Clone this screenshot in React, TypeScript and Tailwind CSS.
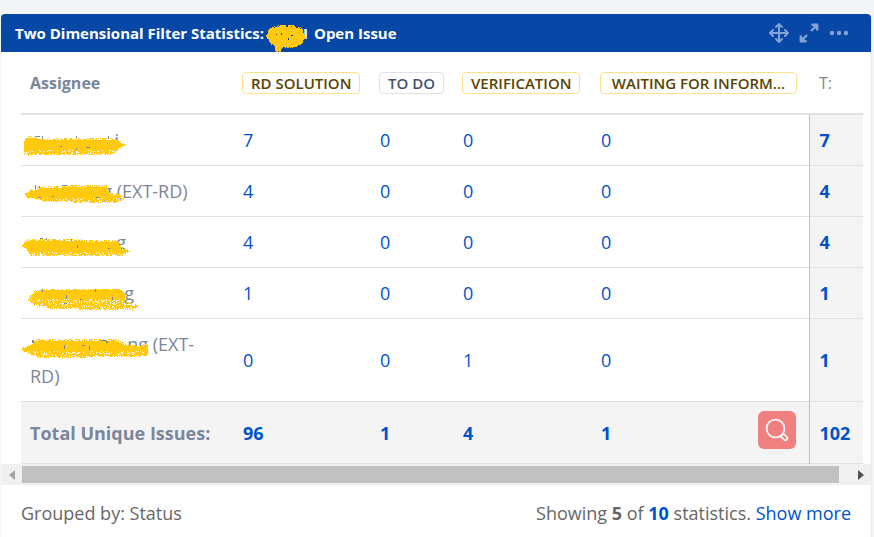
import { useMemo } from "react";
import clsx from "clsx";

type Point = [number, number];

interface Marker {
  width: number;
  height: number;
  top: Point[];
  bottom: Point[];
  seed: number;
  // share of the height, measured from the bottom, that is only loosely covered
  loose: number;
  ticks?: [number, number, number, number][];
}

interface Row {
  id: string;
  marker: Marker;
  boxClass: string;
  markClass: string;
  tail?: string;
  suffix?: string;
  counts: number[];
  total: number;
}

const ROWS: Row[] = [
  {
    id: "r1",
    boxClass: "w-[89px]",
    markClass: "-left-1.5 top-3",
    tail: "i",
    marker: {
      width: 102,
      height: 20,
      seed: 11,
      loose: 0.32,
      top: [[0, 5], [3, 1], [10, 0], [14, 3], [30, 3], [80, 2], [92, 3], [97, 6], [101, 8]],
      bottom: [[0, 18], [4, 19], [60, 18], [88, 18], [93, 14], [101, 9]],
      ticks: [[11, 0, 5, 1], [18, 0, 1, 3], [52, 0, 1, 2], [84, 0, 1, 3], [36, 10, 2, 1], [52, 12, 1, 2], [62, 11, 4, 1]],
    },
    counts: [7, 0, 0, 0],
    total: 7,
  },
  {
    id: "r2",
    boxClass: "w-[82px]",
    markClass: "-left-1.5 top-2.5",
    tail: "g",
    suffix: "(EXT-RD)",
    marker: {
      width: 100,
      height: 18,
      seed: 23,
      loose: 0.28,
      top: [[0, 9], [6, 5], [16, 2], [40, 1], [82, 0], [85, 8], [94, 9], [99, 13]],
      bottom: [[0, 10], [4, 13], [20, 16], [50, 17], [80, 17], [94, 17], [99, 14]],
      ticks: [[11, 0, 1, 4], [15, 1, 1, 2], [38, 0, 5, 1], [14, 12, 3, 1], [28, 11, 2, 1], [72, 12, 3, 1]],
    },
    counts: [4, 0, 0, 0],
    total: 4,
  },
  {
    id: "r3",
    boxClass: "w-[96px]",
    markClass: "-left-2 top-3",
    tail: "g",
    marker: {
      width: 108,
      height: 19,
      seed: 37,
      loose: 0.3,
      top: [[0, 6], [4, 2], [10, 1], [60, 2], [96, 3], [99, 10], [102, 11], [107, 12]],
      bottom: [[0, 8], [5, 12], [8, 17], [14, 18], [80, 17], [100, 17], [107, 13]],
      ticks: [[18, 0, 3, 1], [24, 0, 1, 2], [49, 1, 1, 2], [55, 7, 1, 3], [86, 10, 2, 1]],
    },
    counts: [4, 0, 0, 0],
    total: 4,
  },
  {
    id: "r4",
    boxClass: "w-[104px]",
    markClass: "-left-0.5 top-3",
    tail: "g",
    marker: {
      width: 110,
      height: 22,
      seed: 41,
      loose: 0.55,
      top: [[0, 9], [6, 2], [14, 0], [92, 0], [96, 4], [97, 14], [103, 15], [109, 16]],
      bottom: [[0, 11], [6, 16], [20, 19], [50, 20], [98, 20], [104, 21], [109, 18]],
      ticks: [[14, 0, 1, 3], [38, 6, 1, 4], [52, 10, 2, 1], [67, 0, 1, 3], [36, 14, 3, 1], [84, 8, 1, 3]],
    },
    counts: [1, 0, 0, 0],
    total: 1,
  },
  {
    id: "r5",
    boxClass: "w-[118px]",
    markClass: "-left-2 top-2.5",
    tail: "ng",
    suffix: "(EXT-RD)",
    marker: {
      width: 126,
      height: 21,
      seed: 59,
      loose: 0.42,
      top: [[0, 10], [8, 7], [14, 1], [50, 2], [92, 1], [104, 6], [116, 8], [125, 6]],
      bottom: [[0, 12], [8, 16], [16, 19], [40, 20], [70, 19], [118, 18], [125, 17]],
      ticks: [[10, 2, 2, 3], [42, 7, 1, 4], [60, 7, 3, 1], [67, 8, 1, 4], [79, 2, 5, 1], [84, 3, 2, 2]],
    },
    counts: [0, 0, 1, 0],
    total: 1,
  },
];

const TITLE_MARKER: Marker = {
  width: 40,
  height: 28,
  seed: 7,
  loose: 0.08,
  top: [[0, 10], [3, 3], [10, 1], [24, 0], [33, 2], [36, 4], [39, 12]],
  bottom: [[0, 12], [5, 19], [8, 20], [9, 26], [14, 27], [16, 22], [26, 22], [34, 20], [39, 13]],
  ticks: [[10, 9, 1, 1], [15, 8, 1, 2], [22, 13, 1, 2], [25, 10, 2, 1]],
};

const STATUSES = [
  { label: "RD SOLUTION", tone: "yellow" },
  { label: "TO DO", tone: "gray" },
  { label: "VERIFICATION", tone: "yellow" },
  { label: "WAITING FOR INFORM...", tone: "yellow", wide: true },
];

const TOTALS = [96, 1, 4, 1];

function lerpAt(points: Point[], x: number) {
  for (let i = 1; i < points.length; i++) {
    const [x0, y0] = points[i - 1];
    const [x1, y1] = points[i];
    if (x <= x1) return y0 + ((y1 - y0) * (x - x0)) / (x1 - x0);
  }
  return points[points.length - 1][1];
}

// Spray of one-pixel squares: solid in the middle, ragged along the edges.
function sprayPath({ width, height, top, bottom, seed, loose }: Marker) {
  let state = seed * 7919;
  const random = () => {
    state = (state * 1103515245 + 12345) % 2147483648;
    return state / 2147483648;
  };
  let d = "";
  for (let x = 0; x < width; x++) {
    const y0 = lerpAt(top, x);
    const y1 = lerpAt(bottom, x);
    for (let y = Math.floor(y0); y <= y1; y++) {
      let density = 1;
      if (y > height * (1 - loose)) density = 0.82;
      if (y - y0 < 1 || y1 - y < 1) density = 0.5;
      if (random() < density) d += `M${x} ${y}h1v1h-1z`;
    }
  }
  return d;
}

function MarkerStroke({ marker, className, tickClass }: { marker: Marker; className: string; tickClass: string }) {
  const d = useMemo(() => sprayPath(marker), [marker]);
  return (
    <svg
      width={marker.width}
      height={marker.height}
      shapeRendering="crispEdges"
      className={clsx("absolute max-w-none", className)}
      aria-hidden="true"
    >
      <path d={d} fill="#ffc90e" />
      {marker.ticks?.map(([x, y, w, h]) => (
        <rect key={`${x}-${y}`} x={x} y={y} width={w} height={h} className={tickClass} />
      ))}
    </svg>
  );
}

function Lozenge({ label, tone, wide }: { label: string; tone: string; wide?: boolean }) {
  return (
    <span
      className={clsx(
        "inline-block h-[22px] rounded-[4px] border bg-white px-2 text-center align-middle text-[15px] leading-5 font-semibold whitespace-nowrap",
        wide && "w-full",
        tone === "yellow" ? "border-[#ffe08a] text-[#594300]" : "border-[#dfe1e6] text-[#42526e]"
      )}
    >
      {label}
    </span>
  );
}

function GadgetHeader() {
  return (
    <header className="flex h-[38px] items-center justify-between rounded-t bg-[#0747a6] pr-[22px] pl-[14px]">
      <h3 className="flex text-[15px] leading-5 font-bold whitespace-nowrap text-white">
        Two Dimensional Filter Statistics:
        <span className="relative mr-1.5 ml-0.5 inline-block w-[42px] text-right">
          I
          <MarkerStroke marker={TITLE_MARKER} className="top-0.5 left-0" tickClass="fill-[#0747a6]" />
        </span>
        Open Issue
      </h3>
      <div className="flex items-center gap-[10px] text-[#84a3d3]">
        <button type="button" aria-label="Move">
          <svg width="20" height="20" viewBox="0 0 20 20" fill="none" stroke="currentColor" strokeWidth="2" strokeLinecap="round" strokeLinejoin="round">
            <path d="M10 1.5v17M1.5 10h17M7 4l3-3 3 3M7 16l3 3 3-3M4 7l-3 3 3 3M16 7l3 3-3 3" />
          </svg>
        </button>
        <button type="button" aria-label="Maximize">
          <svg width="20" height="20" viewBox="0 0 20 20" fill="none" stroke="currentColor" strokeWidth="2.4" strokeLinejoin="round">
            <path d="M12.5 1.8H18.2V7.5M18 2l-6 6M1.8 12.5V18.2H7.5M2 18l6-6" />
            <path d="M14 2.5h3.5V6zM2.5 14v3.5H6z" fill="currentColor" strokeWidth="1" />
          </svg>
        </button>
        <button type="button" aria-label="More actions">
          <svg width="20" height="20" viewBox="0 0 20 20" fill="currentColor">
            <circle cx="3" cy="10" r="2.2" />
            <circle cx="10" cy="10" r="2.2" />
            <circle cx="17" cy="10" r="2.2" />
          </svg>
        </button>
      </div>
    </header>
  );
}

function CountLink({ value }: { value: number }) {
  return (
    <a href="#issues" className="text-[#0052cc]">
      {value}
    </a>
  );
}

function StatsTable() {
  return (
    <table className="w-full table-fixed border-collapse text-left text-[18px] leading-8">
      <colgroup>
        <col className="w-[212px]" />
        <col className="w-[137px]" />
        <col className="w-[83px]" />
        <col className="w-[138px]" />
        <col />
        <col className="w-[54px]" />
      </colgroup>
      <thead>
        <tr className="h-[62px] border-b-2 border-[#dfe1e6] text-[#7a869a]">
          <th scope="col" className="px-[9px] text-[16px] font-bold">Assignee</th>
          {STATUSES.map((status) => (
            <th key={status.label} scope="col" className={clsx("pb-1 pl-[9px]", status.wide && "pr-3")}>
              <Lozenge {...status} />
            </th>
          ))}
          <th scope="col" className="px-2.5 text-[16px] font-normal">T:</th>
        </tr>
      </thead>
      <tbody>
        {ROWS.map((row) => (
          <tr key={row.id} className="border-b border-[#dfe1e6]">
            <td className="py-[9px] pr-5 pl-[9px] text-[#7a869a]">
              <span className={clsx("relative inline-block text-right", row.boxClass)}>
                {row.tail}
                <MarkerStroke marker={row.marker} className={row.markClass} tickClass="fill-[#7a869a]" />
              </span>{" "}
              {row.suffix}
            </td>
            {row.counts.map((count, i) => (
              <td key={STATUSES[i].label} className="px-2.5">
                <CountLink value={count} />
              </td>
            ))}
            <td className="border-l border-[#c1c1c1] bg-[#f4f4f4] px-2.5 font-bold">
              <CountLink value={row.total} />
            </td>
          </tr>
        ))}
      </tbody>
      <tfoot>
        <tr className="h-[62px] border-b border-[#dfe1e6] bg-[#f4f4f4] font-bold">
          <th scope="row" className="px-[9px] whitespace-nowrap text-[#7a869a]">Total Unique Issues:</th>
          {TOTALS.map((total, i) => (
            <td key={STATUSES[i].label} className="px-2.5">
              <div className="flex items-center justify-between">
                <CountLink value={total} />
                {i === TOTALS.length - 1 && <SearchButton />}
              </div>
            </td>
          ))}
          <td className="border-l border-[#c1c1c1] px-2.5">
            <CountLink value={102} />
          </td>
        </tr>
      </tfoot>
    </table>
  );
}

function SearchButton() {
  return (
    <button
      type="button"
      aria-label="Search"
      className="-mt-3 mr-[3px] -mb-1.5 flex size-[38px] items-center justify-center rounded-md bg-[#f08080]"
    >
      <svg width="38" height="38" viewBox="0 0 38 38" fill="none" stroke="#f4f4f4" strokeWidth="1.8" strokeLinejoin="round">
        <circle cx="17.5" cy="17.5" r="8.9" />
        <path d="M22.8 25.5l3.2 3.2a1.9 1.9 0 0 0 2.8-2.8l-3.3-3.2z" />
      </svg>
    </button>
  );
}

function HorizontalScrollbar() {
  return (
    <div className="flex h-[21px] items-center bg-[#f0f0f0]" aria-hidden="true">
      <div className="flex w-[21px] justify-center">
        <svg width="6" height="10" viewBox="0 0 6 10" fill="#a3a3a3">
          <path d="M6 0v10L0 5z" />
        </svg>
      </div>
      <div className="mr-[11px] h-[17px] flex-1 bg-[#c1c1c1]" />
      <div className="flex w-[21px] justify-center">
        <svg width="6" height="10" viewBox="0 0 6 10" fill="#505050">
          <path d="M0 0v10l6-5z" />
        </svg>
      </div>
    </div>
  );
}

export default function App() {
  return (
    <div className="min-h-screen bg-[#f4f5f7] pt-[14px] pr-0.5 pl-px font-['Open_Sans','Noto_Sans',sans-serif]">
      <section className="flex min-h-[calc(100vh-14px)] flex-col rounded-t border-r border-[#ebecf0] bg-white">
        <GadgetHeader />
        <div className="pr-2 pl-5">
          <StatsTable />
        </div>
        <HorizontalScrollbar />
        <footer className="flex justify-between pt-3 pr-5 pl-5 text-[18px] leading-8 text-[#666]">
          <span>Grouped by: Status</span>
          <span>
            Showing <strong className="font-bold">5</strong> of{" "}
            <a href="#all" className="font-bold text-[#0052cc]">10</a> statistics.{" "}
            <a href="#more" className="text-[#0052cc]">Show more</a>
          </span>
        </footer>
      </section>
    </div>
  );
}
